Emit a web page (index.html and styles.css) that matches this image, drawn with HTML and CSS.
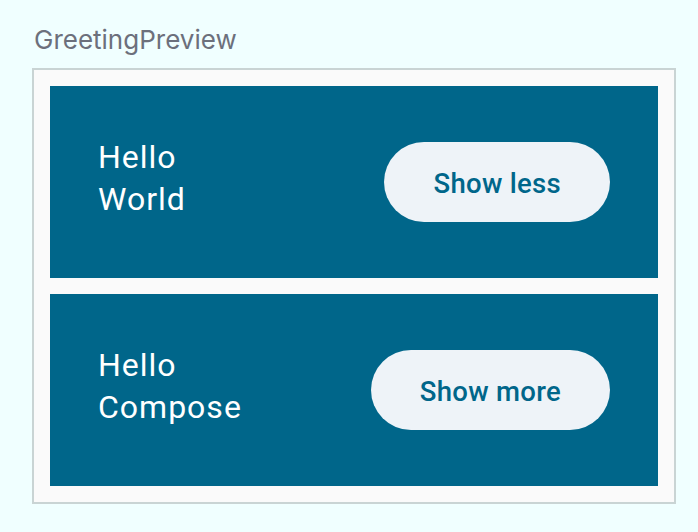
FILE: index.html
```html
<!DOCTYPE html>
<html>
<head>
  <title>GreetingPreview</title>
  <link rel="stylesheet" href="styles.css">
</head>
<body>
  <div class="preview-title">GreetingPreview</div>

  <div class="preview-frame">
    <div class="greeting">
      <div class="greeting-text">Hello<br>World</div>
      <button class="toggle">Show less</button>
    </div>
    <div class="greeting">
      <div class="greeting-text">Hello<br>Compose</div>
      <button class="toggle">Show more</button>
    </div>
  </div>
</body>
</html>
```

FILE: styles.css
```css
body {
  margin: 0;
  background-color: #f0ffff;
  font-family: Roboto, 'Liberation Sans', sans-serif;
}
.preview-title {
  font-family: Inter, 'Noto Sans', sans-serif;
  font-size: 26px;
  line-height: 30px;
  color: #6c707c;
  padding: 25px 0 0 34px;
  margin-bottom: 13px;
}
.preview-frame {
  box-sizing: border-box;
  width: 644px;
  margin-left: 32px;
  padding: 16px;
  border: 2px solid #c9d4d4;
  background-color: #fafafa;
  display: flex;
  flex-direction: column;
  gap: 16px;
}
.greeting {
  box-sizing: border-box;
  height: 192px;
  padding: 0 48px;
  background-color: #00668a;
  display: flex;
  align-items: center;
  justify-content: space-between;
}
.greeting-text {
  align-self: flex-start;
  margin-top: 50px;
  color: #ffffff;
  font-size: 32px;
  line-height: 42px;
  letter-spacing: 1px;
}
.toggle {
  height: 80px;
  padding: 2px 49px 0;
  border: none;
  border-radius: 40px;
  background-color: #eef3f8;
  color: #00668a;
  font-family: Roboto, 'Liberation Sans', sans-serif;
  font-size: 27.5px;
  font-weight: 500;
  letter-spacing: 0.3px;
  cursor: pointer;
}
```
